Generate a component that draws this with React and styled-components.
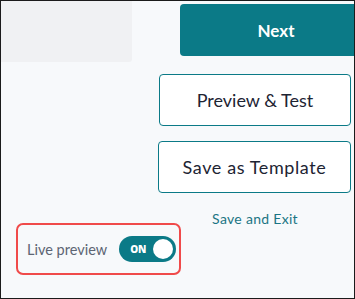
import styled, { createGlobalStyle } from "styled-components"

const GlobalStyle = createGlobalStyle`
  html, body {
    margin: 0;
    padding: 0;
    background: #ffffff;
  }
  * {
    box-sizing: border-box;
  }
`

const Frame = styled.div`
  width: 355px;
  height: 299px;
  border: 1px solid #1b1b1b;
  background: #f7f9fb;
  overflow: hidden;
  display: flex;
  flex-direction: column;
  font-family: "Lato", "Open Sans", sans-serif;
`

const TopRow = styled.div`
  display: flex;
  align-items: flex-start;
  flex-shrink: 0;
`

const Placeholder = styled.div`
  width: 131px;
  height: 61px;
  flex-shrink: 0;
  background: #f0f1f3;
  border-bottom-right-radius: 3px;
`

const PrimaryButton = styled.button`
  flex-shrink: 0;
  width: 192px;
  height: 52px;
  margin: 3px 0 0 48px;
  border: none;
  border-radius: 4px;
  background: #0b7a87;
  color: #ffffff;
  font-family: inherit;
  font-size: 17px;
  font-weight: 700;
  cursor: pointer;
`

const ActionColumn = styled.div`
  display: flex;
  flex-direction: column;
  align-items: flex-end;
  padding-right: 3px;
  margin-top: 12px;
  gap: 15px;
`

const OutlineButton = styled.button`
  width: ${(props) => props.width || 192}px;
  height: 52px;
  border: 1px solid #0b7a87;
  border-radius: 4px;
  background: #ffffff;
  color: #1d2433;
  font-family: inherit;
  font-size: 18px;
  letter-spacing: ${(props) => props.spacing || 0}px;
  cursor: pointer;
`

const TextLink = styled.a`
  display: block;
  width: 192px;
  margin-top: 3px;
  text-align: center;
  color: #1b7584;
  font-size: 14px;
  letter-spacing: 0.3px;
  line-height: 16px;
  text-decoration: none;
  cursor: pointer;
`

const LivePreviewBox = styled.div`
  display: flex;
  align-items: center;
  gap: 12px;
  width: 165px;
  height: 52px;
  margin: -4px 0 0 15px;
  padding-left: 9px;
  border: 2px solid #f04a4a;
  border-radius: 7px;
`

const LiveLabel = styled.span`
  color: #5d6573;
  font-size: 14.5px;
`

const Toggle = styled.button`
  display: flex;
  align-items: center;
  justify-content: space-between;
  width: 57px;
  height: 26px;
  padding: 0 3px 0 11px;
  border: none;
  border-radius: 13px;
  background: ${(props) => (props.on ? "#0b7a87" : "#b8bec7")};
  cursor: pointer;
`

const ToggleText = styled.span`
  color: #ffffff;
  font-family: "Open Sans", sans-serif;
  font-size: 10px;
  font-weight: 800;
`

const Knob = styled.span`
  width: 20px;
  height: 20px;
  border-radius: 50%;
  background: #ffffff;
`

export default function App() {
  return (
    <>
      <GlobalStyle />
      <Frame>
        <TopRow>
          <Placeholder />
          <PrimaryButton>Next</PrimaryButton>
        </TopRow>
        <ActionColumn>
          <OutlineButton>Preview &amp; Test</OutlineButton>
          <OutlineButton width={193} spacing={0.6}>Save as Template</OutlineButton>
          <TextLink>Save and Exit</TextLink>
        </ActionColumn>
        <LivePreviewBox>
          <LiveLabel>Live preview</LiveLabel>
          <Toggle on>
            <ToggleText>ON</ToggleText>
            <Knob />
          </Toggle>
        </LivePreviewBox>
      </Frame>
    </>
  )
}
